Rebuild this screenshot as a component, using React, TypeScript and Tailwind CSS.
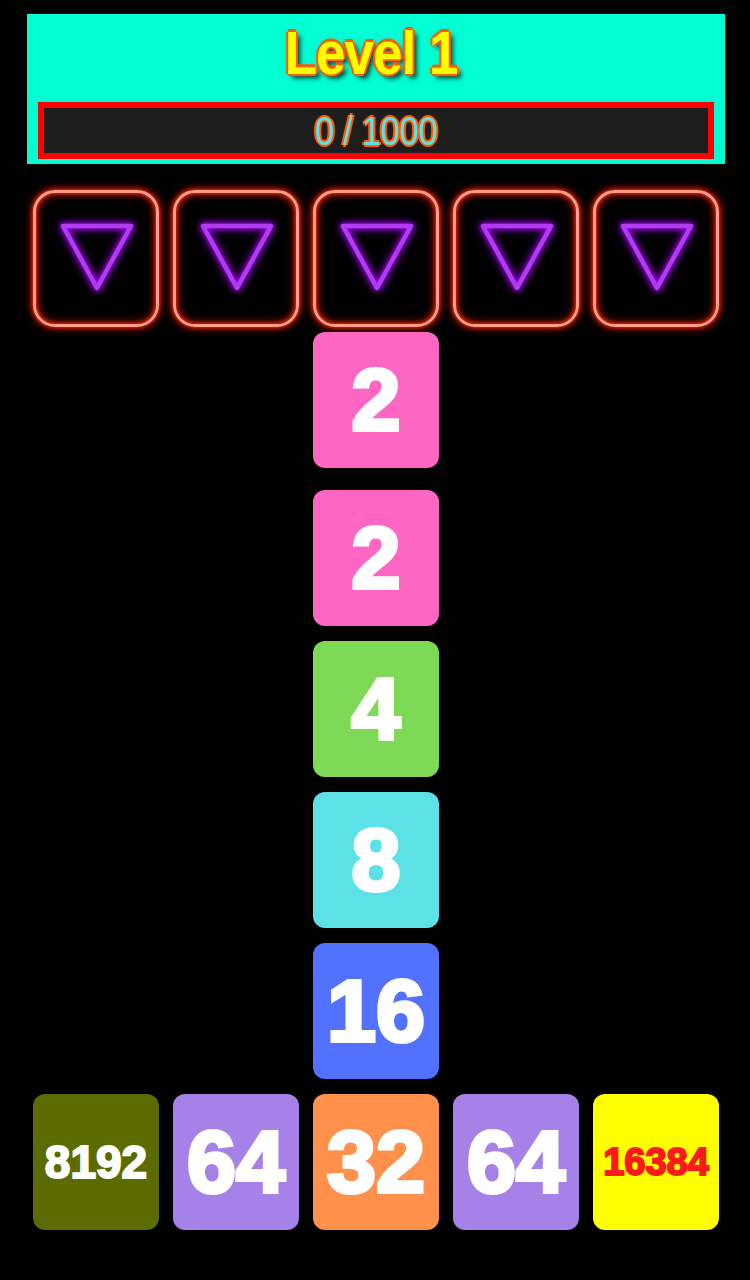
import React from "react";

type Tile = { v: number; bg: string; fg: string; size: string; stroke: string };

const T: Record<number, Tile> = {
  2: { v: 2, bg: "bg-[#ff66c4]", fg: "text-white", size: "text-[88px]", stroke: "[-webkit-text-stroke:4px_currentcolor]" },
  4: { v: 4, bg: "bg-[#7ed957]", fg: "text-white", size: "text-[88px]", stroke: "[-webkit-text-stroke:4px_currentcolor]" },
  8: { v: 8, bg: "bg-[#5ce1e6]", fg: "text-white", size: "text-[88px]", stroke: "[-webkit-text-stroke:4px_currentcolor]" },
  16: { v: 16, bg: "bg-[#5271ff]", fg: "text-white", size: "text-[88px]", stroke: "[-webkit-text-stroke:4px_currentcolor]" },
  32: { v: 32, bg: "bg-[#ff914d]", fg: "text-white", size: "text-[88px]", stroke: "[-webkit-text-stroke:4px_currentcolor]" },
  64: { v: 64, bg: "bg-[#a682e8]", fg: "text-white", size: "text-[88px]", stroke: "[-webkit-text-stroke:4px_currentcolor]" },
  8192: { v: 8192, bg: "bg-[#5b6b00]", fg: "text-white", size: "text-[46px]", stroke: "[-webkit-text-stroke:2px_currentcolor]" },
  16384: { v: 16384, bg: "bg-[#ffff00]", fg: "text-[#ff1a1a]", size: "text-[38px]", stroke: "[-webkit-text-stroke:2px_currentcolor]" },
};

function Block({ t }: { t: Tile }) {
  return (
    <div
      className={`${t.bg} ${t.fg} ${t.size} ${t.stroke} w-[126px] h-[136px] rounded-[12px] flex items-center justify-center font-bold leading-none`}
      style={{ fontFamily: '"Liberation Sans", Arial, sans-serif' }}
    >
      {t.v}
    </div>
  );
}

function Empty() {
  return <div className="w-[126px] h-[136px]" />;
}

function Launcher() {
  return (
    <div className="w-[126px] h-[137px] rounded-[22px] border-[3px] border-[#ff9c8e] shadow-[0_0_4px_#ff3300,0_0_10px_#ff1a00,inset_0_0_4px_#ff3300,inset_0_0_10px_#ff1a00] flex items-center justify-center">
      <svg
        width="82"
        height="78"
        viewBox="0 0 82 78"
        className="mt-[-2px] ml-[2px] [filter:drop-shadow(0_0_2px_#b000ff)_drop-shadow(0_0_4px_#8a00d4)]"
      >
        <path
          d="M7 7 L75 7 L41 69 Z"
          fill="none"
          stroke="#b03cf0"
          strokeWidth="4.5"
          strokeLinejoin="round"
        />
      </svg>
    </div>
  );
}

export default function App() {
  const rows: (number | null)[][] = [
    [null, null, 2, null, null],
    [null, null, 4, null, null],
    [null, null, 8, null, null],
    [null, null, 16, null, null],
    [8192, 64, 32, 64, 16384],
  ];

  return (
    <div className="w-[750px] h-[1280px] bg-black overflow-hidden flex flex-col">
      <div className="ml-[27px] mt-[14px] w-[698px] h-[150px] bg-[#00ffd2] flex flex-col px-[11px]">
        <div className="h-[76px] flex items-center justify-center pr-[10px]">
          <span
            className="inline-block scale-y-[1.15] text-[53px] font-bold text-[#ffff00] tracking-[-1px] leading-none [text-shadow:-2px_0_0_#ff5a00,2px_0_0_#ff5a00,0_-2px_0_#ff5a00,0_2px_0_#ff5a00,0_0_4px_#ff3c00,4px_4px_5px_rgba(0,0,0,0.8)]"
            style={{ fontFamily: '"Liberation Sans", Arial, sans-serif' }}
          >
            Level 1
          </span>
        </div>
        <div className="mt-[12px] h-[57px] border-[6px] border-[#ff0000] bg-[#1e1e1e] flex items-center justify-center">
          <span
            className="inline-block scale-y-[1.15] text-[35px] leading-none text-[#5ce1e6] tracking-[-0.5px] [text-shadow:-2px_0_0_#ff5a00,2px_0_0_#ff5a00,0_-2px_0_#ff5a00,0_2px_0_#ff5a00,0_0_3px_#ff5a00]"
            style={{ fontFamily: '"Liberation Sans", Arial, sans-serif' }}
          >
            0 / 1000
          </span>
        </div>
      </div>

      <div className="ml-[33px] mt-[26px] flex flex-col">
        <div className="flex gap-[14px]">
          {[0, 1, 2, 3, 4].map((i) => (
            <Launcher key={i} />
          ))}
        </div>

        <div className="mt-[5px] ml-[280px]">
          <Block t={T[2]} />
        </div>

        <div className="mt-[22px] flex flex-col gap-[15px]">
          {rows.map((r, ri) => (
            <div key={ri} className="flex gap-[14px]">
              {r.map((v, ci) => (v ? <Block key={ci} t={T[v]} /> : <Empty key={ci} />))}
            </div>
          ))}
        </div>
      </div>
    </div>
  );
}
